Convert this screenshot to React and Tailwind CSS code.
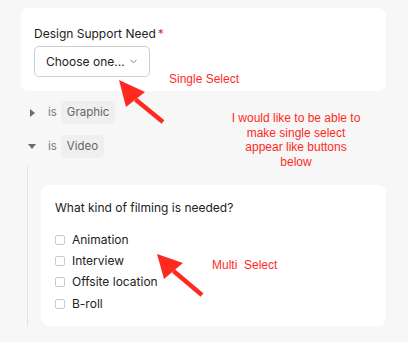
import React from "react";
import { ChevronDown } from "lucide-react";

const options = ["Animation", "Interview", "Offsite location", "B-roll"];

const Arrow = ({ tip, tail, wingA, wingB }) => (
  <>
    <line
      x1={tail[0]}
      y1={tail[1]}
      x2={(wingA[0] + wingB[0]) / 2}
      y2={(wingA[1] + wingB[1]) / 2}
      stroke="#ff2a1f"
      strokeWidth="4.5"
    />
    <polygon
      points={`${tip[0]},${tip[1]} ${wingA[0]},${wingA[1]} ${wingB[0]},${wingB[1]}`}
      fill="#ff2a1f"
    />
  </>
);

const ConditionRow = ({ open, value }) => (
  <div className="flex items-center h-[23px]">
    <div className="w-[36px] flex justify-end">
      {open ? (
        <span className="block w-0 h-0 border-l-[4px] border-r-[4px] border-t-[5px] border-l-transparent border-r-transparent border-t-[#6b6b6b]" />
      ) : (
        <span className="block w-0 h-0 border-t-[4px] border-b-[4px] border-l-[5px] border-t-transparent border-b-transparent border-l-[#6b6b6b] mr-[1px]" />
      )}
    </div>
    <span className="ml-[12px] text-[11.5px] text-[#777]">is</span>
    <span className="ml-[4px] h-[23px] px-[6px] flex items-center rounded-[5px] bg-[#efefef] text-[11.5px] text-[#666]">
      {value}
    </span>
  </div>
);

const App = () => {
  return (
    <div
      className="relative w-[408px] h-[342px] overflow-hidden bg-[#f7f7f7] text-[#222]"
      style={{ fontFamily: "Inter, 'Noto Sans', sans-serif" }}
    >
      <div className="pt-[8px] pl-[21px] w-[386px]">
        <div className="bg-white rounded-[8px] pt-[18px] pb-[14px] px-[13px]">
          <div className="text-[12px] leading-[16px] flex">
            <span>Design Support Need</span>
            <span className="text-[#e0245e] ml-[2px]">*</span>
          </div>
          <div className="mt-[4px] w-[116px] h-[31px] border border-[#cfcfcf] rounded-[5px] flex items-center pl-[11px] pr-[10px] justify-between whitespace-nowrap">
            <span className="text-[12px]">Choose one...</span>
            <ChevronDown size={11} strokeWidth={2} className="text-[#777] shrink-0" />
          </div>
        </div>
      </div>

      <div className="mt-[10px] flex flex-col gap-[11px]">
        <ConditionRow value="Graphic" />
        <ConditionRow open value="Video" />
      </div>

      <div className="mt-[7px] ml-[27px] border-l border-[#e2e2e2] pt-[20px] pl-[13px] w-[359px]">
        <div className="bg-white rounded-[8px] pt-[15px] pb-[12px] px-[14px]">
          <div className="text-[12px] leading-[16px]">
            What kind of filming is needed?
          </div>
          <div className="mt-[13px] flex flex-col">
            {options.map((o) => (
              <div key={o} className="flex items-center h-[21.3px]">
                <span className="w-[10px] h-[10px] border border-[#c9c9c9] rounded-[2px] bg-white" />
                <span className="ml-[7px] text-[12px]">{o}</span>
              </div>
            ))}
          </div>
        </div>
      </div>

      <svg className="absolute left-0 top-0 pointer-events-none" width="408" height="342">
        <Arrow tip={[119, 80]} tail={[163, 122]} wingA={[145, 92]} wingB={[126, 107]} />
        <Arrow tip={[157, 254]} tail={[202, 295]} wingA={[183, 263]} wingB={[164, 279]} />
      </svg>

      <div
        className="absolute left-[169px] top-[70px] text-[12px] text-[#ff2a1f]"
        style={{ fontFamily: "'Liberation Sans', Arial, sans-serif" }}
      >
        Single Select
      </div>
      <div
        className="absolute left-[216px] top-[111px] w-[160px] text-center text-[12px] leading-[14.5px] text-[#ff2a1f]"
        style={{ fontFamily: "'Liberation Sans', Arial, sans-serif" }}
      >
        I would like to be able to
        <br />
        make single select
        <br />
        appear like buttons
        <br />
        below
      </div>
      <div
        className="absolute left-[212px] top-[256px] text-[12px] text-[#ff2a1f] whitespace-pre"
        style={{ fontFamily: "'Liberation Sans', Arial, sans-serif" }}
      >
        {"Multi  Select"}
      </div>
    </div>
  );
};

export default App;
